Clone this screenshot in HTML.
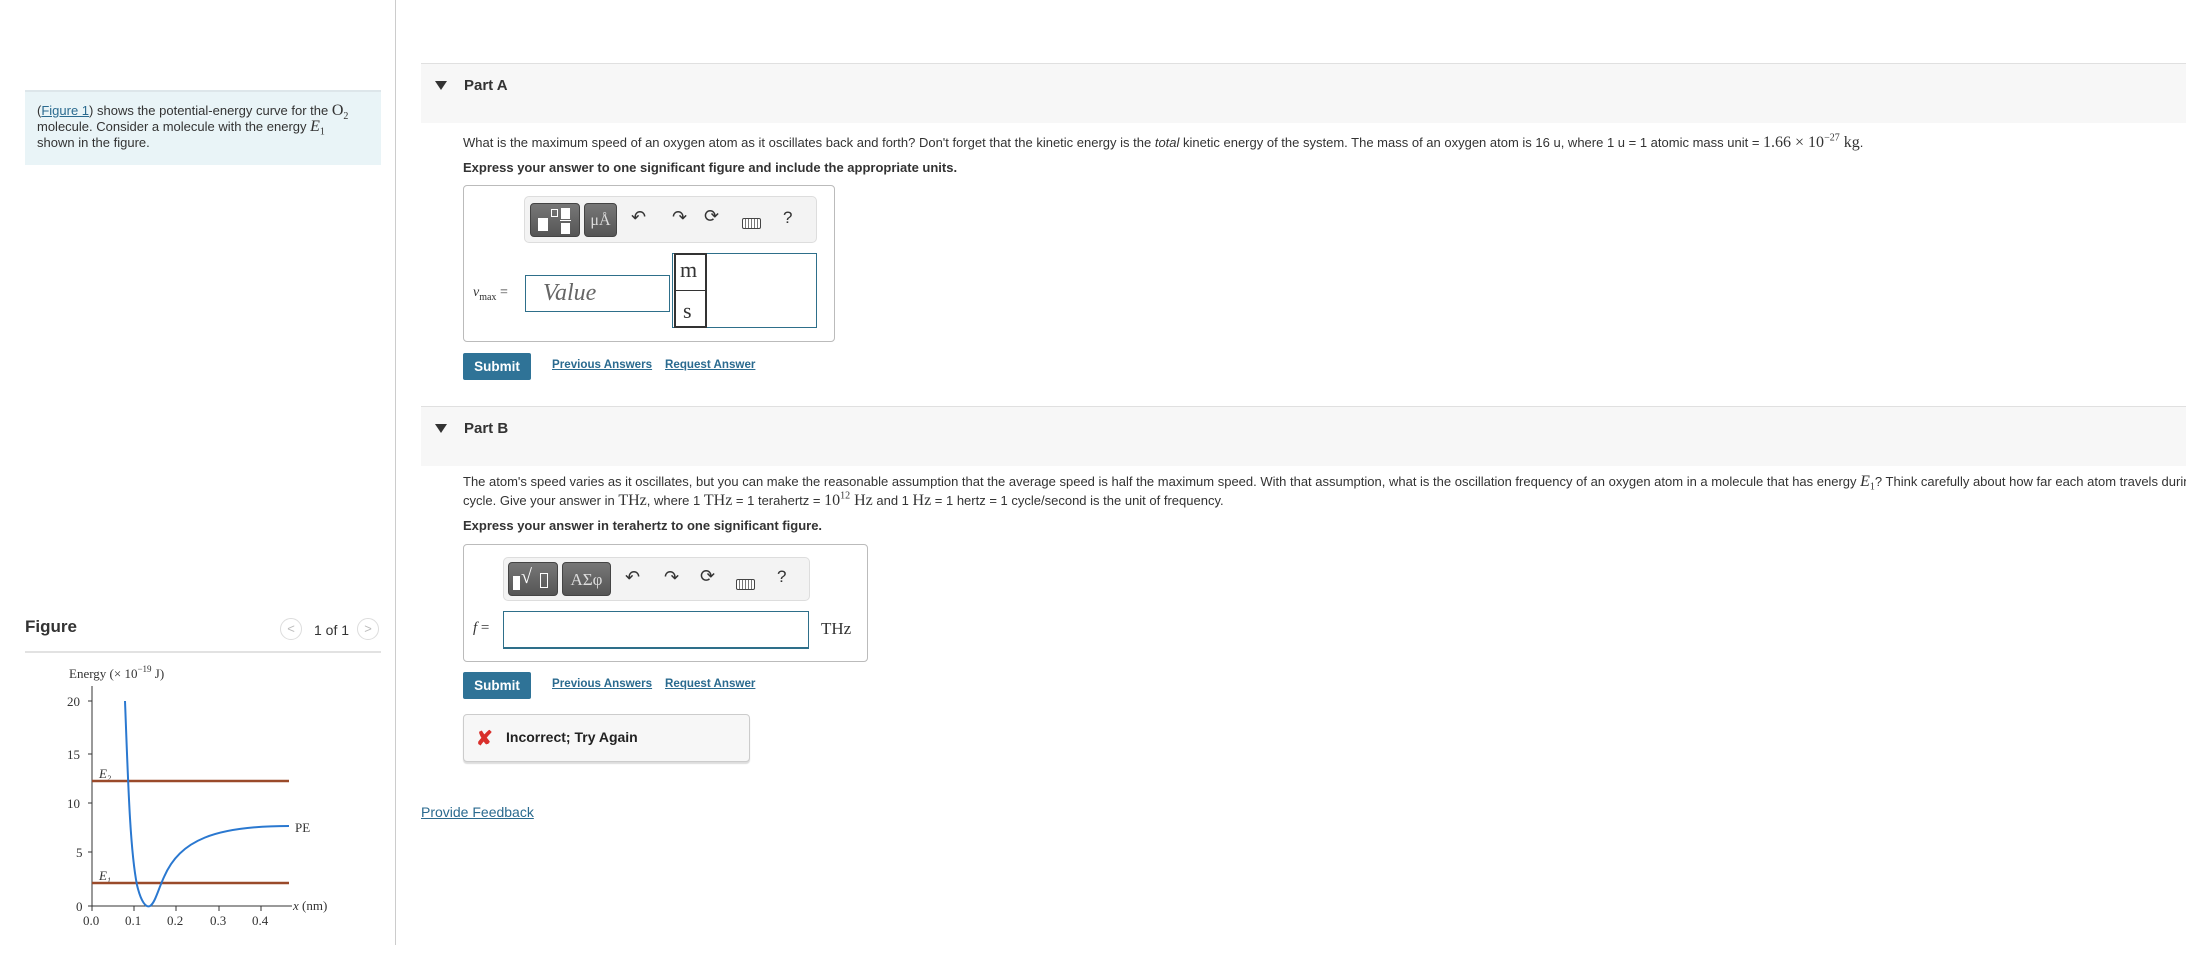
<!DOCTYPE html>
<html><head><meta charset="utf-8"><style>
*{margin:0;padding:0;box-sizing:border-box}
html,body{width:2186px;height:966px;overflow:hidden}
body{position:relative;background:#fff;font-family:"Liberation Sans",Arial,sans-serif;color:#333}
.a{position:absolute;white-space:nowrap}
.ser{font-family:"Liberation Serif",serif}
sub,sup{line-height:0}
a,.lnk{color:#2a6a8f;text-decoration:underline}
.band{position:absolute;left:421px;width:1765px;height:60px;background:#f7f7f7;border-top:1px solid #e0e0e0}
.tri{position:absolute;width:0;height:0;border-left:6px solid transparent;border-right:6px solid transparent;border-top:9px solid #333}
.ptitle{font-weight:bold;font-size:15px}
.q{font-size:13px;color:#333}
.box{position:absolute;border:1px solid #bbb;border-radius:4px;background:#fff}
.tb{position:absolute;background:#f3f3f3;border:1px solid #ddd;border-radius:5px}
.btn{position:absolute;background:linear-gradient(#777,#555);border:1px solid #444;border-radius:4px;color:#ddd}
.sub{position:absolute;background:#2f7397;color:#fff;font-weight:bold;font-size:13.5px;text-align:center;line-height:27px;width:68px;height:27px;border-radius:2px}
.ic{position:absolute;font-size:18px;color:#333}
#clip{position:absolute;left:0;top:0;width:2186px;height:966px;overflow:hidden}
</style></head><body><div id="clip">

<div class="a" style="left:395px;top:0;width:1px;height:945px;background:#ccc"></div>
<div class="a" style="left:25px;top:90px;width:356px;height:75px;background:#e9f4f7;border-top:2px solid #dde6ea"></div>
<div class="a" style="left:37px;top:103px;font-size:13px;line-height:16px;white-space:normal;width:340px">(<a>Figure 1</a>) shows the potential-energy curve for the <span class="ser" style="font-size:16px">O<sub style="font-size:10px">2</sub></span><br>molecule. Consider a molecule with the energy <i class="ser" style="font-size:16px">E</i><sub class="ser" style="font-size:10px">1</sub><br>shown in the figure.</div>

<div class="a" style="left:25px;top:617px;font-size:17px;font-weight:bold">Figure</div>
<div class="a" style="left:280px;top:618px;width:22px;height:22px;border:1px solid #ddd;border-radius:50%;color:#bbb;font-size:13px;text-align:center;line-height:20px">&lt;</div>
<div class="a" style="left:314px;top:622px;font-size:14px">1 of 1</div>
<div class="a" style="left:357px;top:618px;width:22px;height:22px;border:1px solid #ddd;border-radius:50%;color:#bbb;font-size:13px;text-align:center;line-height:20px">&gt;</div>
<div class="a" style="left:25px;top:651px;width:356px;height:2px;background:#e2e2e2"></div>

<svg class="a" style="left:0;top:655px" width="395" height="300" viewBox="0 655 395 300">
 <g font-family="Liberation Serif,serif" font-size="13" fill="#333">
  <text x="69" y="678">Energy (× 10<tspan dy="-6" font-size="9">−19</tspan><tspan dy="6"> J)</tspan></text>
  <text x="67" y="706">20</text><text x="67" y="759">15</text><text x="67" y="808">10</text><text x="76" y="857">5</text><text x="76" y="911">0</text>
  <text x="83" y="925">0.0</text><text x="125" y="925">0.1</text><text x="167" y="925">0.2</text><text x="210" y="925">0.3</text><text x="252" y="925">0.4</text>
  <text x="293" y="910"><tspan font-style="italic">x</tspan> (nm)</text>
  <text x="295" y="832">PE</text>
  <text x="99" y="778" font-style="italic">E<tspan font-size="8" dy="3">2</tspan></text>
  <text x="99" y="880" font-style="italic">E<tspan font-size="8" dy="3">1</tspan></text>
 </g>
 <g stroke="#333" stroke-width="1" fill="none">
  <line x1="92" y1="686" x2="92" y2="910"/>
  <line x1="92" y1="906" x2="292" y2="906"/>
  <line x1="88" y1="701" x2="92" y2="701"/><line x1="88" y1="754" x2="92" y2="754"/><line x1="88" y1="803" x2="92" y2="803"/><line x1="88" y1="852" x2="92" y2="852"/><line x1="88" y1="906" x2="92" y2="906"/>
  <line x1="92" y1="906" x2="92" y2="911"/><line x1="134" y1="906" x2="134" y2="911"/><line x1="176" y1="906" x2="176" y2="911"/><line x1="219" y1="906" x2="219" y2="911"/><line x1="261" y1="906" x2="261" y2="911"/>
 </g>
 <line x1="92" y1="781" x2="289" y2="781" stroke="#9a4a2a" stroke-width="2.5"/>
 <line x1="92" y1="883" x2="289" y2="883" stroke="#9a4a2a" stroke-width="2.5"/>
 <path d="M125,701 C128,780 130,850 137,885 C141,902 146,908 150,906 C155,903 158,890 164,877 C180,840 215,826 289,826" stroke="#2a78d0" stroke-width="2" fill="none"/>
</svg>

<div class="band" style="top:63px"></div>
<div class="tri" style="left:435px;top:81px"></div>
<div class="a ptitle" style="left:464px;top:77px">Part A</div>
<div class="a q" style="left:463px;top:134px">What is the maximum speed of an oxygen atom as it oscillates back and forth? Don't forget that the kinetic energy is the <i>total</i> kinetic energy of the system. The mass of an oxygen atom is 16 u, where 1 u = 1 atomic mass unit = <span class="ser" style="font-size:16px">1.66 × 10<sup style="font-size:10px">−27</sup> kg</span>.</div>
<div class="a q" style="left:463px;top:160px;font-weight:bold">Express your answer to one significant figure and include the appropriate units.</div>

<div class="box" style="left:463px;top:185px;width:372px;height:157px"></div>
<div class="tb" style="left:524px;top:196px;width:293px;height:47px"></div>
<div class="btn" style="left:530px;top:203px;width:50px;height:34px"><div class="a" style="left:7px;top:14px;width:10px;height:13px;background:#fff"></div><div class="a" style="left:20px;top:5px;width:7px;height:8px;border:1px solid #fff"></div><div class="a" style="left:30px;top:4px;width:9px;height:11px;background:#fff"></div><div class="a" style="left:29px;top:16px;width:11px;height:1px;background:#fff"></div><div class="a" style="left:30px;top:19px;width:9px;height:11px;background:#fff"></div></div>
<div class="btn ser" style="left:584px;top:203px;width:33px;height:34px;font-size:16px;text-align:center;line-height:34px">μÅ</div>
<div class="ic" style="left:631px;top:207px">↶</div>
<div class="ic" style="left:672px;top:207px">↷</div>
<div class="ic" style="left:704px;top:206px">⟳</div>
<div class="a" style="left:742px;top:218px;width:19px;height:11px;border:1px solid #444;border-radius:2px;background:repeating-linear-gradient(90deg,#fff 0 2px,#777 2px 3px)"></div>
<div class="ic" style="left:783px;top:208px;font-size:17px">?</div>

<div class="a ser" style="left:473px;top:285px;font-size:14px"><i>v</i><sub style="font-size:10px">max</sub> =</div>
<div class="a" style="left:525px;top:275px;width:145px;height:37px;border:1px solid #2e6f8a"></div>
<div class="a ser" style="left:543px;top:280px;font-size:24px;font-style:italic;color:#666">Value</div>
<div class="a" style="left:672px;top:253px;width:145px;height:75px;border:1px solid #2e6f8a"></div>
<div class="a" style="left:674px;top:253px;width:33px;height:75px;border:2px solid #333"></div>
<div class="a" style="left:676px;top:290px;width:29px;height:1px;background:#333"></div>
<div class="a ser" style="left:680px;top:257px;font-size:22px">m</div>
<div class="a ser" style="left:683px;top:298px;font-size:22px">s</div>

<div class="sub" style="left:463px;top:353px">Submit</div>
<div class="a lnk" style="left:552px;top:358px;font-size:11.6px;font-weight:bold">Previous Answers</div>
<div class="a lnk" style="left:665px;top:358px;font-size:11.6px;font-weight:bold">Request Answer</div>

<div class="band" style="top:406px"></div>
<div class="tri" style="left:435px;top:424px"></div>
<div class="a ptitle" style="left:464px;top:420px">Part B</div>
<div class="a q" style="left:463px;top:473px">The atom's speed varies as it oscillates, but you can make the reasonable assumption that the average speed is half the maximum speed. With that assumption, what is the oscillation frequency of an oxygen atom in a molecule that has energy <i class="ser" style="font-size:16px">E</i><sub class="ser" style="font-size:10px">1</sub>? Think carefully about how far each atom travels during one</div>
<div class="a q" style="left:463px;top:492px">cycle. Give your answer in <span class="ser" style="font-size:16px">THz</span>, where 1 <span class="ser" style="font-size:16px">THz</span> = 1 terahertz = <span class="ser" style="font-size:16px">10<sup style="font-size:10px">12</sup> Hz</span> and 1 <span class="ser" style="font-size:16px">Hz</span> = 1 hertz = 1 cycle/second is the unit of frequency.</div>
<div class="a q" style="left:463px;top:518px;font-weight:bold">Express your answer in terahertz to one significant figure.</div>

<div class="box" style="left:463px;top:544px;width:405px;height:118px"></div>
<div class="tb" style="left:503px;top:557px;width:307px;height:44px"></div>
<div class="btn" style="left:508px;top:562px;width:50px;height:34px"><div class="a" style="left:4px;top:13px;width:7px;height:14px;background:#fff"></div><div class="a ser" style="left:12px;top:3px;font-size:20px;color:#fff">√</div><div class="a" style="left:31px;top:10px;width:8px;height:15px;border:1px solid #fff"></div></div>
<div class="btn ser" style="left:562px;top:562px;width:49px;height:34px;font-size:17px;text-align:center;line-height:34px">ΑΣφ</div>
<div class="ic" style="left:625px;top:567px">↶</div>
<div class="ic" style="left:664px;top:567px">↷</div>
<div class="ic" style="left:700px;top:566px">⟳</div>
<div class="a" style="left:736px;top:579px;width:19px;height:11px;border:1px solid #444;border-radius:2px;background:repeating-linear-gradient(90deg,#fff 0 2px,#777 2px 3px)"></div>
<div class="ic" style="left:777px;top:567px;font-size:17px">?</div>

<div class="a ser" style="left:473px;top:620px;font-size:15px"><i>f</i> =</div>
<div class="a" style="left:503px;top:611px;width:306px;height:38px;border:1px solid #2e6f8a;border-bottom-width:2px"></div>
<div class="a ser" style="left:821px;top:619px;font-size:17px">THz</div>

<div class="sub" style="left:463px;top:672px">Submit</div>
<div class="a lnk" style="left:552px;top:677px;font-size:11.6px;font-weight:bold">Previous Answers</div>
<div class="a lnk" style="left:665px;top:677px;font-size:11.6px;font-weight:bold">Request Answer</div>

<div class="a" style="left:463px;top:714px;width:287px;height:48px;background:#f7f7f7;border:1px solid #ccc;border-radius:4px;box-shadow:0 2px 1px #ddd"></div>
<div class="a" style="left:476px;top:726px;font-size:20px;font-weight:bold;color:#d9302c">✘</div>
<div class="a" style="left:506px;top:729px;font-size:14px;font-weight:bold;color:#222">Incorrect; Try Again</div>

<div class="a lnk" style="left:421px;top:804px;font-size:14px">Provide Feedback</div>
</div></body></html>
